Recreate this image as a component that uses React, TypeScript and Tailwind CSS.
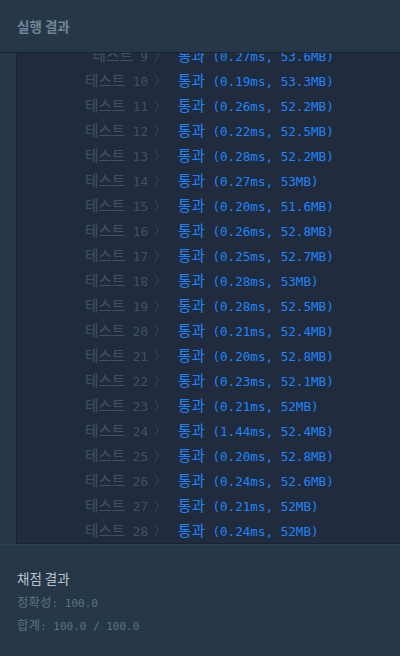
import { useEffect, useRef } from "react";

const results: [string, string][] = [
  ["0.25ms", "52.1MB"],
  ["0.22ms", "52.4MB"],
  ["0.21ms", "53MB"],
  ["0.24ms", "52.6MB"],
  ["0.30ms", "52.2MB"],
  ["0.19ms", "52.8MB"],
  ["0.23ms", "53.1MB"],
  ["0.20ms", "52.5MB"],
  ["0.27ms", "53.6MB"],
  ["0.19ms", "53.3MB"],
  ["0.26ms", "52.2MB"],
  ["0.22ms", "52.5MB"],
  ["0.28ms", "52.2MB"],
  ["0.27ms", "53MB"],
  ["0.20ms", "51.6MB"],
  ["0.26ms", "52.8MB"],
  ["0.25ms", "52.7MB"],
  ["0.28ms", "53MB"],
  ["0.28ms", "52.5MB"],
  ["0.21ms", "52.4MB"],
  ["0.20ms", "52.8MB"],
  ["0.23ms", "52.1MB"],
  ["0.21ms", "52MB"],
  ["1.44ms", "52.4MB"],
  ["0.20ms", "52.8MB"],
  ["0.24ms", "52.6MB"],
  ["0.21ms", "52MB"],
  ["0.24ms", "52MB"],
];

const mono = "font-['DejaVu_Sans_Mono','Noto_Sans_CJK_KR',monospace]";
const ko = "font-['Noto_Sans_CJK_KR',sans-serif]";

function TestRow({ n, time, mem }: { n: number; time: string; mem: string }) {
  return (
    <div className={`flex h-[25px] items-center whitespace-pre text-[12.6px] ${mono}`}>
      <span className="w-[131px] text-right text-[#405165]">
        <span className={`text-[14.6px] ${ko}`}>테스트</span> {n}
      </span>
      <span className={`w-[30px] pl-[6px] text-[12px] text-[#34465a] ${ko}`}>〉</span>
      <span className="text-[#1f84fb]">
        <span className={`text-[14.6px] ${ko}`}>통과</span> ({time}, {mem})
      </span>
    </div>
  );
}

export default function App() {
  const listRef = useRef<HTMLDivElement>(null);

  useEffect(() => {
    // output box is scrolled to the bottom
    if (listRef.current) listRef.current.scrollTop = listRef.current.scrollHeight;
  }, []);

  return (
    <div className="flex h-[656px] w-[400px] flex-col overflow-hidden bg-[#263747]">
      <div className="flex h-[53px] shrink-0 items-center border-b border-[#172332] pl-[17px]">
        <span className={`text-[13.5px] font-bold text-[#6f8597] ${ko}`}>실행 결과</span>
      </div>
      <div className="flex border-b border-[#2c3f52] pl-[16px]">
        <div
          ref={listRef}
          className="h-[491px] flex-1 overflow-y-auto border-b border-l border-[#172332] bg-[#202c3d] [scrollbar-width:none]"
        >
          {results.map(([time, mem], i) => (
            <TestRow key={i} n={i + 1} time={time} mem={mem} />
          ))}
        </div>
      </div>
      <div className="flex flex-col pl-[17px] pt-[21px]">
        <div className={`h-[24px] text-[13.5px] leading-[24px] text-[#b8c4ce] ${ko}`}>채점 결과</div>
        <div className={`h-[23px] text-[11px] leading-[23px] text-[#5b7285] ${mono}`}>
          <span className={`text-[12.5px] ${ko}`}>정확성</span>: 100.0
        </div>
        <div className={`h-[23px] text-[11px] leading-[23px] text-[#5b7285] ${mono}`}>
          <span className={`text-[12.5px] ${ko}`}>합계</span>: 100.0 / 100.0
        </div>
      </div>
    </div>
  );
}
